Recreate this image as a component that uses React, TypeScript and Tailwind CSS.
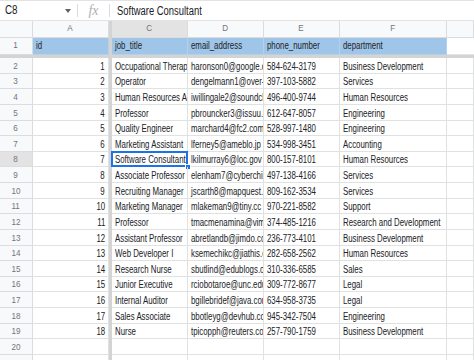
import React from "react";

type Row = [string, string, string, string, string];

const data: Row[] = [
  ["1", "Occupational Therapist", "haronson0@google.com.au", "584-624-3179", "Business Development"],
  ["2", "Operator", "dengelmann1@over-blog.com", "397-103-5882", "Services"],
  ["3", "Human Resources Assistant I", "iwillingale2@soundcloud.com", "496-400-9744", "Human Resources"],
  ["4", "Professor", "pbrouncker3@issuu.com", "612-647-8057", "Engineering"],
  ["5", "Quality Engineer", "marchard4@fc2.com", "528-997-1480", "Engineering"],
  ["6", "Marketing Assistant", "lferney5@ameblo.jp", "534-998-3451", "Accounting"],
  ["7", "Software Consultant", "lkilmurray6@loc.gov", "800-157-8101", "Human Resources"],
  ["8", "Associate Professor", "elenham7@cyberchimps.com", "497-138-4166", "Services"],
  ["9", "Recruiting Manager", "jscarth8@mapquest.com", "809-162-3534", "Services"],
  ["10", "Marketing Manager", "mlakeman9@tiny.cc", "970-221-8582", "Support"],
  ["11", "Professor", "tmacmenamina@vimeo.com", "374-485-1216", "Research and Development"],
  ["12", "Assistant Professor", "abretlandb@jimdo.com", "236-773-4101", "Business Development"],
  ["13", "Web Developer I", "ksemechikc@jiathis.com", "282-658-2562", "Human Resources"],
  ["14", "Research Nurse", "sbutlind@edublogs.org", "310-336-6585", "Sales"],
  ["15", "Junior Executive", "rciobotaroe@unc.edu", "309-772-8677", "Legal"],
  ["16", "Internal Auditor", "bgillebridef@java.com", "634-958-3735", "Legal"],
  ["17", "Sales Associate", "bbotleyg@devhub.com", "945-342-7504", "Engineering"],
  ["18", "Nurse", "tpicopph@reuters.com", "257-790-1759", "Business Development"],
  ["", "", "", "", ""],
  ["", "", "", "", ""],
];

function T({ children, right }: { children: React.ReactNode; right?: boolean }) {
  return (
    <span
      className={`inline-block whitespace-nowrap scale-x-[0.785] ${right ? "origin-right" : "origin-left"}`}
    >
      {children}
    </span>
  );
}

const cellText =
  "overflow-hidden whitespace-nowrap text-[10px] leading-[11px] text-[#202124] flex items-end pb-[1px] border-r border-b border-[#e0e1e1] shrink-0";

function DataRow({ n, row }: { n: number; row: Row }) {
  const sel = n === 8;
  return (
    <div className="flex h-[15.63px]">
      <div
        className={`w-[33px] shrink-0 border-r border-b border-[#dadce0] flex items-end justify-center pb-[2px] text-[9px] leading-[10px] text-[#70757a] ${
          sel ? "bg-[#e3e3e3]" : "bg-[#f8f9fa]"
        }`}
      >
        <span className="inline-block scale-x-90">{n}</span>
      </div>
      <div className={`${cellText} w-[76px] justify-end pr-[3px]`}>
        <T right>{row[0]}</T>
      </div>
      <div className="w-[3px] shrink-0 bg-[#d4d4d4]" />
      <div className={`${cellText} w-[76px] pl-[2.5px] relative overflow-visible`}>
        <span className="overflow-hidden block w-[73px]">
          <T>{row[1]}</T>
        </span>
        {sel && (
          <>
            <div className="absolute left-[-1px] top-[-1px] right-[-1px] bottom-[-1px] border-2 border-[#1a73e8]" />
            <div className="absolute right-[-4px] bottom-[-4px] w-[6px] h-[6px] bg-[#1a73e8] border border-white" />
          </>
        )}
      </div>
      <div className={`${cellText} w-[76px] pl-[3px]`}>
        <T>{row[2]}</T>
      </div>
      <div className={`${cellText} w-[76px] pl-[3px]`}>
        <T>{row[3]}</T>
      </div>
      <div className={`${cellText} w-[107px] pl-[3px]`}>
        <T>{row[4]}</T>
      </div>
      <div className={`${cellText} flex-1`} />
    </div>
  );
}

export default function App() {
  const headCell =
    "shrink-0 border-r border-b border-[#dadce0] flex items-center justify-center text-[9px] text-[#70757a]";
  const blueCell =
    "shrink-0 overflow-hidden whitespace-nowrap bg-[#9fc5e8] border-r border-b border-[#b5d1ea] flex items-end pb-[3px] pl-[3px] text-[10px] leading-[11px] text-[#1f1f1f]";
  return (
    <div className="w-[474px] h-[360px] overflow-hidden bg-white font-['Liberation_Sans','Arial',sans-serif]">
      {/* formula bar */}
      <div className="h-[21px] flex items-center border-t border-b border-[#e3e3e3] bg-white">
        <div className="w-[77px] shrink-0 flex items-center pl-[5px] pr-[6px] h-full">
          <span className="text-[12.5px] text-[#202124] flex-1">
            <T>C8</T>
          </span>
          <svg width="6" height="4" viewBox="0 0 6 4">
            <path d="M0 0 L6 0 L3 4 Z" fill="#5f6368" />
          </svg>
        </div>
        <div className="w-px h-[13px] bg-[#dadce0]" />
        <div className="w-[31px] shrink-0 flex items-center justify-center">
          <span className="font-['Liberation_Serif',serif] italic text-[14px] text-[#b0b0b0] leading-none">fx</span>
        </div>
        <div className="w-px h-[13px] bg-[#dadce0]" />
        <span className="pl-[7px] text-[12px] text-[#202124]">
          <T>Software Consultant</T>
        </span>
      </div>

      {/* column headers */}
      <div className="flex h-[17px] bg-[#f8f9fa]">
        <div className={`${headCell} w-[33px]`} />
        <div className={`${headCell} w-[76px]`}>
          <span className="inline-block scale-x-90">A</span>
        </div>
        <div className="w-[3px] shrink-0 bg-[#d4d4d4]" />
        <div className={`${headCell} w-[76px] bg-[#e3e3e3]`}>
          <span className="inline-block scale-x-90">C</span>
        </div>
        <div className={`${headCell} w-[76px]`}>
          <span className="inline-block scale-x-90">D</span>
        </div>
        <div className={`${headCell} w-[76px]`}>
          <span className="inline-block scale-x-90">E</span>
        </div>
        <div className={`${headCell} w-[107px]`}>
          <span className="inline-block scale-x-90">F</span>
        </div>
        <div className={`${headCell} flex-1`} />
      </div>

      {/* row 1 (header data) */}
      <div className="flex h-[17px]">
        <div className="w-[33px] shrink-0 bg-[#f8f9fa] border-r border-b border-[#dadce0] flex items-center justify-center text-[9px] text-[#70757a]">
          <span className="inline-block scale-x-90">1</span>
        </div>
        <div className={`${blueCell} w-[76px]`}>
          <T>id</T>
        </div>
        <div className="w-[3px] shrink-0 bg-[#d4d4d4]" />
        <div className={`${blueCell} w-[76px]`}>
          <T>job_title</T>
        </div>
        <div className={`${blueCell} w-[76px]`}>
          <T>email_address</T>
        </div>
        <div className={`${blueCell} w-[76px]`}>
          <T>phone_number</T>
        </div>
        <div className={`${blueCell} w-[107px]`}>
          <T>department</T>
        </div>
        <div className="flex-1 border-b border-[#e2e3e3]" />
      </div>

      {/* horizontal freeze bar */}
      <div className="h-[3px] bg-[#d4d4d4]" />

      {data.map((r, i) => (
        <DataRow key={i} n={i + 2} row={r} />
      ))}
    </div>
  );
}
